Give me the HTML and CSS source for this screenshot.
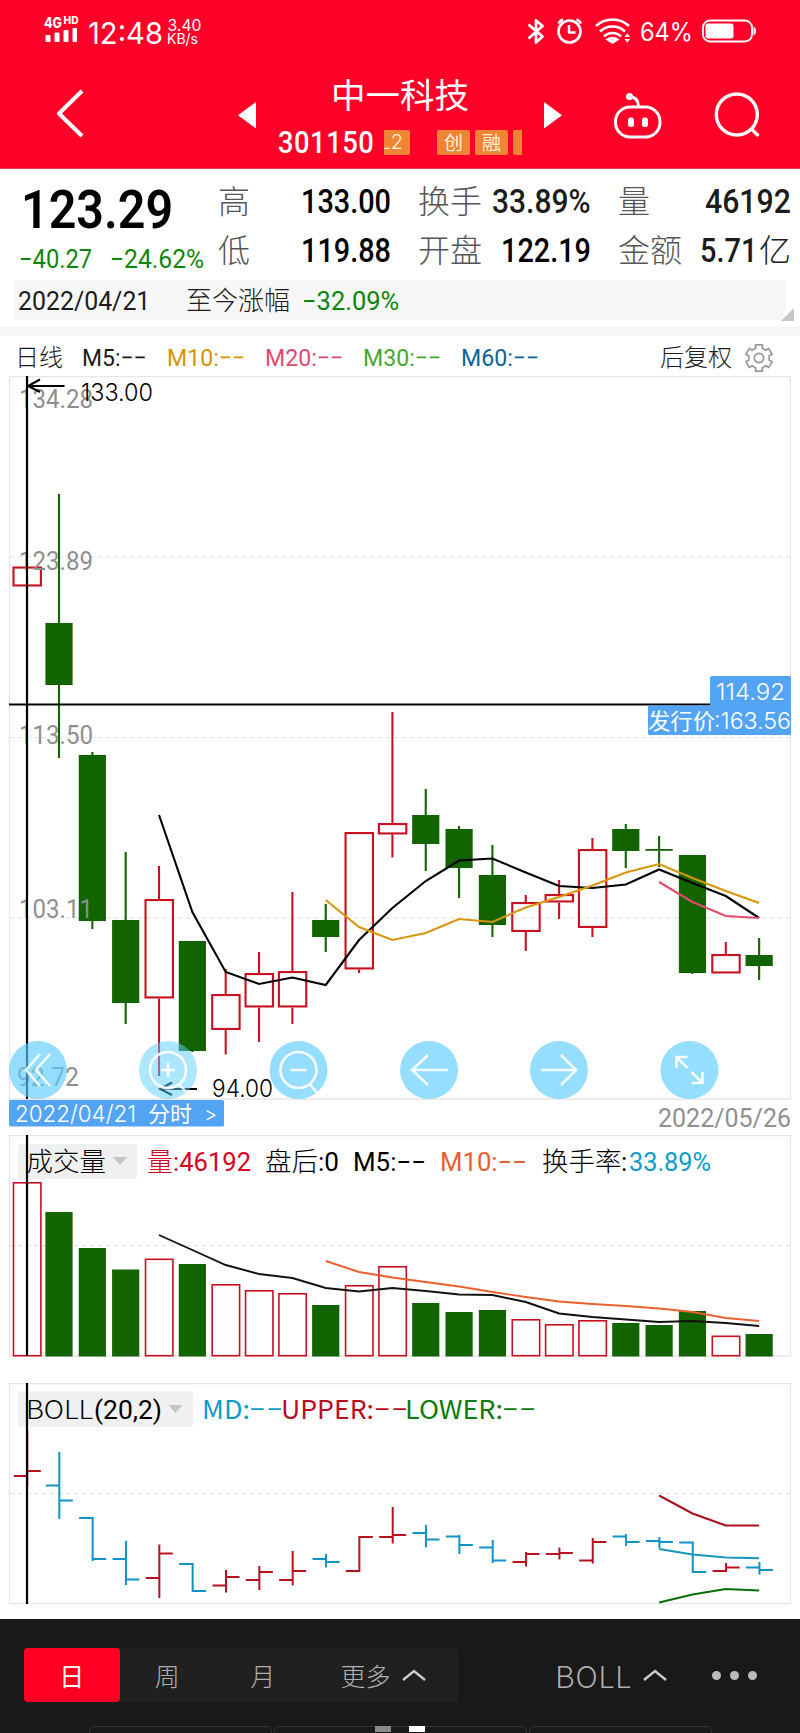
FILE: index.html
```html
<!DOCTYPE html>
<html lang="zh-CN">
<head>
<meta charset="utf-8">
<title>中一科技 301150</title>
<link rel="stylesheet" href="styles.css">
</head>
<body>
<header class="top">
  <svg class="status" viewBox="0 0 800 60">
    <g class="fill">
      <text class="bold" x="44" y="27.500" font-size="14" textLength="18" lengthAdjust="spacingAndGlyphs">4G</text>
      <text class="bold" x="63.500" y="23.500" font-size="10" textLength="15" lengthAdjust="spacingAndGlyphs">HD</text>
      <rect x="45.500" y="35" width="5" height="7" rx="1"/><rect x="54.500" y="32.500" width="5" height="9.500" rx="1"/>
      <rect x="63.500" y="30" width="5" height="12" rx="1"/><rect x="72.500" y="28" width="4.500" height="14" rx="1"/>
      <text class="inter" x="88" y="43.500" font-size="30" textLength="75" lengthAdjust="spacingAndGlyphs">12:48</text>
      <text class="inter" x="167.500" y="30.500" font-size="16" textLength="34" lengthAdjust="spacingAndGlyphs">3.40</text>
      <text class="inter" x="167" y="44" font-size="14.500" textLength="31" lengthAdjust="spacingAndGlyphs">KB/s</text>
      <text class="inter" x="640" y="41" font-size="25" textLength="53" lengthAdjust="spacingAndGlyphs">64%</text>
      <path d="M605.500 39.500 A10.500 10.500 0 0 1 619.500 39.500 L612.500 44Z"/>
      <path d="M624.500 37l2.800-3.800 2.800 3.800zM624.500 39l2.800 3.800 2.800-3.800z"/>
      <rect x="705.500" y="23.500" width="28" height="15" rx="2.500"/>
      <path d="M753.500 26.500q2.500 1 2.500 4.500t-2.500 4.500z"/>
    </g>
    <g class="line">
      <path d="M528.500 24.500L542.500 36.500L536 42.500V20.500L542.500 26L528.500 38.500" stroke-width="2.800"/>
      <circle cx="569.500" cy="31.500" r="11" stroke-width="2.600"/>
      <path d="M569 25v7.500h6.500M558.500 23.500a7 7 0 0 1 4.500-4M576.500 19.500a7 7 0 0 1 4.500 4" stroke-width="2.500"/>
      <path d="M596 26A24 24 0 0 1 629 26M600 31.500A18 18 0 0 1 625 31.500M604 36.500A12 12 0 0 1 621 36.500" stroke-width="2.600"/>
      <rect x="703" y="20.500" width="49" height="21" rx="7" stroke-width="1.800"/>
    </g>
  </svg>
  <nav class="nav">
    <svg width="100" height="108" viewBox="0 60 100 108"><path class="line" stroke-width="4" d="M82 91L59 113.500L82 136"/></svg>
    <svg width="170" height="108" viewBox="100 60 170 108"><path class="fill" d="M256 102V128.500L238 115.300Z"/></svg>
    <div class="stock">
      <h1>中一科技</h1>
      <div class="code"><b class="din" data-w="96">301150</b>
        <span class="tags"><i class="tag l2">L2</i><i class="tag">创</i><i class="tag">融</i><i class="tag cut">深</i></span>
      </div>
    </div>
    <svg width="50" height="108" viewBox="530 60 50 108"><path class="fill" d="M544 102V128.500L562 115.300Z"/></svg>
    <svg width="120" height="108" viewBox="580 60 120 108">
      <g class="line" stroke-width="3"><rect x="615.500" y="107" width="44.500" height="30" rx="14.500"/><path d="M629.500 96.500Q638 97 638.500 106"/></g>
      <g class="fill"><circle cx="629.500" cy="96.500" r="3.500"/><rect x="628" y="117.500" width="6" height="9.500" rx="2.500"/><rect x="642" y="117.500" width="6" height="9.500" rx="2.500"/></g>
    </svg>
    <svg width="100" height="108" viewBox="700 60 100 108"><g class="line" stroke-width="3.400"><circle cx="736.800" cy="114.500" r="20.500"/><path d="M751 128.500L758.500 136"/></g></svg>
  </nav>
</header>

<section class="quote">
  <div class="main">
    <div class="price"><b class="din" data-w="152">123.29</b></div>
    <div class="change"><span class="din" data-w="73">−40.27</span><span class="din" data-w="94">−24.62%</span></div>
  </div>
  <dl class="facts">
    <div><dt>高</dt><dd class="dark"><b class="din" data-w="90">133.00</b></dd></div>
    <div><dt>换手</dt><dd><b class="din" data-w="99">33.89%</b></dd></div>
    <div><dt>量</dt><dd><b class="din" data-w="86">46192</b></dd></div>
    <div><dt>低</dt><dd class="dark"><b class="din" data-w="90">119.88</b></dd></div>
    <div><dt>开盘</dt><dd class="dark"><b class="din" data-w="90">122.19</b></dd></div>
    <div><dt>金额</dt><dd class="amt"><b class="din" data-w="57">5.71</b>亿</dd></div>
  </dl>
</section>
<section class="since">
  <span class="din" data-w="132">2022/04/21</span><span class="lbl">至今涨幅</span><span class="din green" data-w="97">−32.09%</span>
  <i class="corner"></i>
</section>
<section class="legend">
  <span class="name">日线</span>
  <span class="din" data-w="65">M5:−−</span>
  <span class="din m10" data-w="78">M10:−−</span>
  <span class="din m20" data-w="78">M20:−−</span>
  <span class="din m30" data-w="78">M30:−−</span>
  <span class="din m60" data-w="78">M60:−−</span>
  <span class="adj">后复权</span>
  <svg class="gear" width="30" height="30" viewBox="-15 -15 30 30"><path id="cog"/><circle r="4.700"/></svg>
</section>

<svg class="chart" id="kline" height="759" viewBox="0 376 800 759">
  <g class="frame"><path d="M9.500 376.500H790.500V1099H9.500Z"/><path class="dash" d="M10 557H790M10 737.500H790M10 918H790"/></g>
  <g id="candles"></g>
  <g class="axis">
    <text x="19" y="408" textLength="74" lengthAdjust="spacingAndGlyphs">134.28</text>
    <text x="19" y="569.500" textLength="74" lengthAdjust="spacingAndGlyphs">123.89</text>
    <text x="19" y="743.500" textLength="74" lengthAdjust="spacingAndGlyphs">113.50</text>
    <text x="19" y="917.500" textLength="74" lengthAdjust="spacingAndGlyphs">103.11</text>
    <text x="17" y="1086" textLength="62" lengthAdjust="spacingAndGlyphs">92.72</text>
    <text x="658" y="1126.500" textLength="133" lengthAdjust="spacingAndGlyphs">2022/05/26</text>
  </g>
  <g id="kmas"></g>
  <g class="mark">
    <path d="M64.500 386H28M40 379.500L28 386L40 392M197 1089H160M172 1082.500L160 1089L172 1095"/>
    <text x="81" y="400.500" textLength="72" lengthAdjust="spacingAndGlyphs">133.00</text>
    <text x="212" y="1097" textLength="61" lengthAdjust="spacingAndGlyphs">94.00</text>
  </g>
  <path class="cross" d="M9 704.500H711M27 376V1099"/>
  <g class="blue">
    <rect x="710" y="676" width="81" height="30" rx="1.500"/><rect x="648" y="705.500" width="143" height="29.500" rx="1.500"/>
    <rect x="9" y="1100" width="215" height="26.500" rx="1.500"/>
    <text class="inter" x="716" y="699.500" font-size="22.500" textLength="69" lengthAdjust="spacingAndGlyphs">114.92</text>
    <text class="cjk" x="648" y="728.500" font-size="22" textLength="67" lengthAdjust="spacingAndGlyphs">发行价</text>
    <text class="inter" x="714" y="728.500" font-size="22.500" textLength="77" lengthAdjust="spacingAndGlyphs">:163.56</text>
    <text class="inter" x="15" y="1122" font-size="23" textLength="121" lengthAdjust="spacingAndGlyphs">2022/04/21</text>
    <text class="cjk" x="148" y="1121.500" font-size="22">分时</text>
    <text class="inter" x="204" y="1120.500" font-size="20">&gt;</text>
  </g>
  <g class="ctl">
    <g transform="translate(38 1070)"><circle r="29"/><path d="M2-16L-12 0L2 16M12-16L-2 0L12 16"/></g>
    <g class="faint" transform="translate(168 1070)"><circle r="29"/><path d="M18 0A18 18 0 1 0 9 15.600M11 14L18 22M-7 0H7M0-7V7M18 0A18 18 0 0 1 9 15.600"/></g>
    <g transform="translate(298.500 1070)"><circle r="29"/><path d="M11 14L19 23M-8 0H8M18 0A18 18 0 1 1-18 0A18 18 0 1 1 18 0"/></g>
    <g transform="translate(429 1070)"><circle r="29"/><path d="M19 0H-17M-1-15L-17 0L-1 15"/></g>
    <g transform="translate(559 1070)"><circle r="29"/><path d="M-18 0H17M2-15L17 0L2 15"/></g>
    <g transform="translate(689.500 1070)"><circle r="29"/><path d="M-2-2L-12-12M-13-2V-13H-2M2 2L12 12M13 2V13H2"/></g>
  </g>
</svg>

<svg class="chart" id="volume" height="248" viewBox="0 1135 800 248">
  <g class="frame"><path d="M9.500 1135.500H790.500V1356H9.500Z"/><path class="dash" d="M10 1245.500H790"/></g>
  <rect class="pick" x="18" y="1144" width="119" height="35" rx="3"/><path class="caret" d="M113 1157H127L120 1165Z"/>
  <g id="vols"></g><path class="cross" d="M27 1135V1356"/>
  <text class="cjk" x="26.500" y="1170.500" font-size="26.500">成交量</text>
  <text class="cjk red" x="147" y="1170.500" font-size="26">量</text>
  <text class="dinx red" x="173" y="1171" textLength="78" lengthAdjust="spacingAndGlyphs">:46192</text>
  <text class="cjk" x="265" y="1170.500" font-size="26.500">盘后</text>
  <text class="dinx" x="318" y="1171" textLength="21" lengthAdjust="spacingAndGlyphs">:0</text>
  <text class="dinl" x="353" y="1171" textLength="73" lengthAdjust="spacingAndGlyphs">M5:−−</text>
  <text class="dinl org" x="440" y="1171" textLength="87" lengthAdjust="spacingAndGlyphs">M10:−−</text>
  <text class="cjk" x="542" y="1170.500" font-size="26.500">换手率</text>
  <text class="dinx" x="621" y="1171">:</text>
  <text class="dinx cyan" x="629" y="1171" textLength="82" lengthAdjust="spacingAndGlyphs">33.89%</text>
</svg>

<svg class="chart" id="boll" height="236" viewBox="0 1383 800 236">
  <g class="frame"><path d="M9.500 1383.500H790.500V1603.500H9.500Z"/><path class="dash" d="M10 1493.500H790"/></g>
  <g id="bars"></g>
  <rect class="pick" x="18" y="1391.500" width="175" height="35.500" rx="3"/><path class="caret" d="M168.500 1405H182.500L175.500 1413Z"/>
  <path class="cross" d="M27 1383V1604"/>
  <text class="cjk" x="26" y="1419" font-size="26" textLength="67" lengthAdjust="spacingAndGlyphs">BOLL</text>
  <text class="dinx" x="94" y="1419" textLength="68" lengthAdjust="spacingAndGlyphs">(20,2)</text>
  <g class="lat" font-size="26">
    <text class="cyan" x="202" y="1419" textLength="48" lengthAdjust="spacingAndGlyphs">MD:</text>
    <text class="cyan" x="250" y="1419" textLength="32" lengthAdjust="spacing">−−</text>
    <text class="dred" x="281" y="1419" textLength="93" lengthAdjust="spacingAndGlyphs">UPPER:</text>
    <text class="dred" x="375" y="1419" textLength="32" lengthAdjust="spacing">−−</text>
    <text class="grn" x="405" y="1419" textLength="98" lengthAdjust="spacingAndGlyphs">LOWER:</text>
    <text class="grn" x="503" y="1419" textLength="32" lengthAdjust="spacing">−−</text>
  </g>
</svg>

<footer class="bottom">
  <div class="bar">
    <div class="seg"><span class="on">日</span><span>周</span><span>月</span><span class="more">更多<svg width="26" height="14" viewBox="0 0 26 14"><path d="M2 12L13 3L24 12"/></svg></span></div>
    <div class="ind"><em>BOLL</em><svg width="26" height="14" viewBox="0 0 26 14"><path d="M2 12L13 3L24 12"/></svg></div>
    <div class="dots"><i></i><i></i><i></i></div>
  </div>
  <div class="peek"><i></i><i></i><i></i><b class="p1"></b><b class="p2"></b></div>
</footer>
<script src="chart.js"></script>
</body>
</html>
```
FILE: styles.css
```css
* { box-sizing: border-box; }
body { margin: 0; width: 800px; height: 1733px; overflow: hidden; background: #fff; color: #1c1c1c;
  font-family: "Noto Sans CJK SC", sans-serif; font-weight: 300; }
svg { display: block; flex: none; }
i, em { font-style: normal; }
.inter { font-family: Inter, Roboto, sans-serif; font-weight: 300; }
.status .inter { font-weight: 400; }
.bold { font-family: Inter, sans-serif; font-weight: 800; }
.din { font-family: Roboto, sans-serif; font-weight: 400; display: inline-block; white-space: nowrap; }
b.din { font-weight: 500; }
.din > span { display: inline-block; transform-origin: 0 50%; }

.top { height: 169px; background: #ff0029; border-bottom: 1px solid #d93a55; color: #fff; }
.fill { fill: #fff; }
.line { fill: none; stroke: #fff; stroke-linejoin: round; }
.status { width: 800px; height: 60px; }
.nav { display: flex; height: 108px; }
.stock { width: 260px; }
.stock h1 { margin: 8px 0 0; font-size: 34.500px; line-height: 50px; height: 50px; font-weight: 400; text-align: center; }
.code { display: flex; align-items: center; padding-left: 8px; margin-top: 6px; height: 37px; }
.code b { font-size: 31px; line-height: 37px; letter-spacing: .6px; }
.tags { display: flex; margin-left: 10px; width: 138px; overflow: hidden; }
.tag { flex: none; width: 33px; height: 25px; margin-right: 5px; border-radius: 2px; background: #ee8434; color: #fff3d8;
  font-size: 19px; line-height: 24px; text-align: center; overflow: hidden; font-weight: 400; }
.tag.l2 { width: 26px; margin-right: 27px; padding-right: 7px; direction: rtl; font-family: Inter, sans-serif; font-weight: 300; font-size: 20px; text-align: right; border-radius: 0 2px 2px 0; }
.tag.cut { margin-right: 0; padding-left: 7px; }

.quote { display: flex; height: 111px; }
.main { width: 219px; flex: none; }
.price { height: 65px; padding: 8px 0 0 21px; }
.price b { font-size: 54.500px; line-height: 65px; color: #000; font-weight: 600; }
.change { display: flex; gap: 18px; padding-left: 19px; margin-top: 5px; font-size: 26px; line-height: 40px; height: 40px; color: #0a870a; }
.change .din { font-weight: 450; }
.facts { margin: 6px 0 0; display: grid; grid-template-columns: 172px 172px 172px; column-gap: 28px; grid-auto-rows: 49px; }
.facts > div { display: flex; justify-content: space-between; align-items: baseline; line-height: 49px; height: 49px; white-space: nowrap; }
.facts dt { font-size: 32px; color: #555; margin-left: -1px; }
.facts dd { margin: 0; font-size: 32px; }
.facts dd b { font-size: 33px; }
.facts .amt b { margin-right: 2px; }
.dark { color: #000; }
.green { color: #0a870a; }
.since .green { font-weight: 450; }

.since { position: relative; margin: 0 14px 7px; height: 40px; padding-left: 4px; background: #f7f7f7; display: flex; align-items: baseline; line-height: 37px; font-size: 26px; white-space: nowrap; }
.since .lbl { margin: 0 12px 0 36px; }
.corner { position: absolute; right: -8px; bottom: -1px; border-style: solid; border-width: 0 0 13px 13px; border-color: transparent transparent #c6c6c6; }
.legend { display: flex; align-items: baseline; height: 49px; border-top: 9px solid #f6f6f6; padding-left: 15px; line-height: 40px; font-size: 24px; white-space: nowrap; }
.legend .din { margin-right: 20px; }
.legend .name { width: 67px; }
.m10 { color: #d69400; } .m20 { color: #e04a72; } .m30 { color: #45a82c; } .m60 { color: #0a6496; }
.adj { margin-left: 101px; width: 84px; }
.gear { align-self: center; margin-top: 4px; fill: none; stroke: #999; stroke-width: 1.700; stroke-linejoin: round; }

.chart { width: 800px; }
.frame path { fill: none; stroke: #e6e6e6; stroke-width: 1.300; }
.frame .dash { stroke: #e2e2e2; stroke-width: 1.200; stroke-dasharray: 5 3; }
.cross { fill: none; stroke: #000; stroke-width: 2.200; }
.axis { font: 450 25.500px Roboto, sans-serif; fill: #8f8f8f; }
.mark { font: 300 23.500px Inter, sans-serif; fill: #000; }
.mark path { fill: none; stroke: #000; stroke-width: 2; }
.blue { fill: #fff; }
.blue rect { fill: #54a4f6; }
.blue .cjk { font-weight: 400; }
.cjk { font-family: "Noto Sans CJK SC", sans-serif; font-weight: 300; }
.lat { font-family: "Noto Sans CJK SC", sans-serif; font-weight: 400; }
.dinx { font: 450 26px Roboto, sans-serif; }
.dinl { font: 400 26px Roboto, sans-serif; }
.ctl circle { fill: #5ccdff; fill-opacity: .65; }
.ctl path { fill: none; stroke: #fff; stroke-width: 2.600; stroke-opacity: .9; }
.ctl .faint circle { fill-opacity: .5; }
.pick { fill: #eff1f0; }
.caret { fill: #c4c4c4; }
.red { fill: #d8001e; } .dred { fill: #b80e20; } .cyan { fill: #0e9bcc; } .grn { fill: #0a7d0a; } .org { fill: #ea5f2c; }

.bottom { height: 114px; background: #191919; color: #b0b0b0; }
.bar { display: flex; align-items: center; padding: 29px 0 0 24px; }
.seg { display: flex; width: 434px; height: 54px; background: #202020; border-radius: 4px; font-size: 25px; line-height: 54px; }
.seg span { width: 95.500px; text-align: center; }
.seg .on { background: #ff0022; color: #fff; border-radius: 4px; font-weight: 400; }
.seg .more { width: 146px; display: flex; justify-content: center; align-items: center; gap: 10px; }
.bar svg path { fill: none; stroke: #ccc; stroke-width: 2.400; }
.ind { display: flex; align-items: center; gap: 11px; margin-left: 97px; }
.ind em { font-size: 30.500px; line-height: 54px; width: 76px; letter-spacing: .8px; }
.dots { display: flex; gap: 9px; margin-left: 44px; }
.dots i { width: 9px; height: 9px; border-radius: 50%; background: #bbb; }
.peek { position: relative; display: flex; gap: 2px; margin: 24px 0 0 89px; height: 7px; overflow: hidden; width: 640px; }
.peek i { flex: none; height: 20px; border: 1.500px solid #343434; border-radius: 5px; width: 183px; }
.peek i:nth-child(2) { width: 253px; }
.peek b { position: absolute; top: -1px; height: 7px; width: 16px; }
.p1 { left: 286px; background: #8b8b8b; } .p2 { left: 320px; background: #fff; }
```
FILE: chart.js
```js
// Condenses a run of digits to the width set on its element.
document.querySelectorAll('[data-w]').forEach(function (el) {
  var w = +el.dataset.w, s = document.createElement('span');
  s.textContent = el.textContent;
  el.textContent = '';
  el.appendChild(s);
  s.style.transform = 'scaleX(' + w / s.offsetWidth + ')';
  el.style.width = w + 'px';
});

var GREEN = '#126400', RED = '#c81020', BLUE = '#0f93c8';
function X(i) { return i ? 59 + 33.34 * (i - 1) : 27; }
function put(id, html) { document.getElementById(id).innerHTML += html; }
function line(start, ys, color, w) {
  return '<polyline fill="none" stroke="' + color + '" stroke-width="' + (w || 2.1) + '" points="' +
    ys.map(function (y, k) { return X(start + k) + ',' + y; }).join(' ') + '"/>';
}
function body(i, red, t, b, sw) {
  return red
    ? '<rect x="' + (X(i) - 13.5) + '" y="' + (t + sw / 2) + '" width="27.4" height="' + (b - t - sw) + '" fill="none" stroke="' + RED + '" stroke-width="' + sw + '"/>'
    : '<rect x="' + (X(i) - 13.6) + '" y="' + t + '" width="27.2" height="' + (b - t) + '" fill="' + GREEN + '"/>';
}
function seg(x, a, b, c) { return '<path d="M' + x + ' ' + a + 'V' + b + '" stroke="' + c + '" stroke-width="2.1"/>'; }

// [up, bodyTop, bodyBottom, high, low]
var K = [[1,566.5,586.5,570,570],[0,623,685,494,758],[0,755,921,752,929],[0,920,1003,852,1024],[1,899,998.5,866,1076],
  [0,941,1051,941,1052],[1,994,1030,969,1054.5],[1,973,1007.5,952,1042],[1,971,1007.5,892,1024],[0,920,937,904,952],
  [1,832,969.5,832,973],[1,823,834.5,712,857.5],[0,815,844,789,871],[0,829,868,826,898],[0,875,925,845,937],
  [1,902,932,895,951],[1,894,902.5,880,919],[1,849,928,838,937],[0,829,851,824,868],[0,849,850.8,836,867],
  [0,855,973,855,974],[1,954,973.5,942,954],[0,955,966,938,980]];
put('candles', K.map(function (k, i) {
  var c = k[0] ? RED : GREEN, s = '';
  if (k[3] < k[1]) s += seg(X(i), k[3], k[1], c);
  if (k[4] > k[2]) s += seg(X(i), k[2], k[4], c);
  return s + body(i, k[0], k[1], k[2], 2.1);
}).join(''));
put('kmas',
  line(4, [815,912,972,984,977.5,985,940,908,881,860.5,858.5,872.5,886,888,884.5,869.5,883,896,918], '#000') +
  line(9, [900,927,940,933,919,922,907.5,897,885.5,872.5,864,878,891,903], '#d9960c') +
  line(19, [882,902,916,918], '#dc4e6c'));

var V = [1182,1212,1248,1269.5,1258.5,1264,1284,1290,1293,1305,1285,1266,1303,1312,1310,1319,1324,1320,1323,1325,1311,1335.5,1334];
put('vols', V.map(function (v, i) { return body(i, K[i][0], v, 1356.5, 1.6); }).join('') +
  line(4, [1235,1250,1265,1274,1278,1288,1291.5,1288,1291,1294.5,1295,1302,1313.5,1317,1319.5,1322,1321,1323,1326], '#111', 1.9) +
  line(9, [1261,1272,1277.5,1282,1286.5,1292,1297,1301.5,1304,1306,1308.5,1312,1318,1321], '#ec6030', 1.9));

// [open, close, high, low]
var B = [[1476,1471,1431,1486],[1485.5,1500.5,1453,1518],[1518,1559,1518,1560],[1559,1579.5,1542,1584],[1578,1553.5,1545.5,1597],
  [1564,1591,1564,1591],[1585.5,1577,1571,1591.5],[1580,1572,1567,1589],[1580,1571,1552,1584.5],[1559,1562,1555,1566.5],
  [1571,1537,1537,1571],[1537,1535,1508,1542.5],[1533,1539.5,1526,1546.5],[1536.5,1545,1536,1553],[1547.5,1560.5,1541,1562],
  [1562,1554,1553,1565.5],[1554,1553,1548.5,1558.5],[1560.5,1542,1539,1562.5],[1536.5,1542,1535,1545],[1541,1542,1538,1547],
  [1542.5,1572,1542.5,1572],[1571,1567.5,1564,1571],[1567.5,1570,1563,1573.5]];
put('bars', B.map(function (b, i) {
  var x = X(i) + .3;
  return '<path fill="none" stroke-width="2" stroke="' + (K[i][0] ? '#b8121f' : BLUE) + '" d="M' + (x - 13.5) + ' ' + b[0] + 'H' + x +
    'M' + x + ' ' + b[1] + 'H' + (x + 13.5) + 'M' + x + ' ' + (b[2] - .9) + 'V' + (b[3] + .9) + '"/>';
}).join('') +
  line(19, [1495.5,1513.5,1525.5,1525.5], '#b0101e') + line(19, [1549,1554.5,1557.5,1558.3], '#1597bf') +
  line(19, [1602.5,1594.5,1589,1590.5], '#087008'));

// Six-toothed cog outline
var pts = [];
for (var t = 0; t < 6; t++) {
  [[-15, 13.6], [15, 13.6], [18, 10.4], [42, 10.4]].forEach(function (p) {
    var a = (t * 60 - 90 + p[0]) * Math.PI / 180;
    pts.push((p[1] * Math.cos(a)).toFixed(2) + ' ' + (p[1] * Math.sin(a)).toFixed(2));
  });
}
document.getElementById('cog').setAttribute('d', 'M' + pts.join('L') + 'Z');
```
